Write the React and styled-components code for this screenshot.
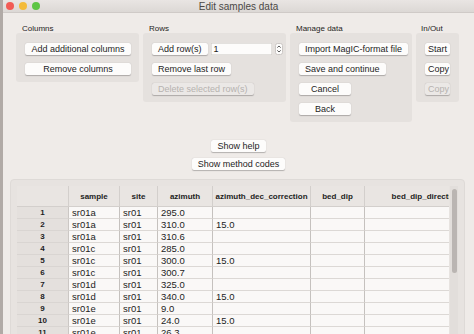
import React from "react";
import styled, { createGlobalStyle } from "styled-components";

const GlobalStyle = createGlobalStyle`
  html, body {
    margin: 0;
    padding: 0;
    overflow: hidden;
    background: #efebe8;
  }
  * { box-sizing: border-box; }
`;

const Window = styled.div`
  width: 474px;
  height: 334px;
  overflow: hidden;
  background: #efebe8;
  border-left: 3px solid #b1aaa6;
  font-family: "Liberation Sans", Arial, sans-serif;
  color: #1d1d1d;
  display: flex;
  flex-direction: column;
`;

const TitleBar = styled.div`
  height: 13px;
  flex: none;
  background: linear-gradient(#e9e5e3, #dcd8d5);
  border-bottom: 1px solid #cfcac7;
  position: relative;
  display: flex;
  align-items: center;
  justify-content: center;
  font-size: 10px;
  color: #4b4846;
`;

const Lights = styled.div`
  position: absolute;
  left: 3px;
  top: 2px;
  display: flex;
  gap: 5px;
`;

const Light = styled.span`
  width: 8px;
  height: 8px;
  border-radius: 50%;
  background: ${(p) => p.$c};
`;

const Controls = styled.div`
  display: flex;
  align-items: flex-start;
  gap: 4px;
  padding: 11px 0 0 13px;
`;

const Group = styled.div`
  display: flex;
  flex-direction: column;
  width: ${(p) => p.$w}px;
`;

const GroupLabel = styled.div`
  font-size: 8px;
  height: 9px;
  line-height: 9px;
  padding-left: ${(p) => p.$pad || 6}px;
  color: #262423;
`;

const Box = styled.div`
  background: #e5e1de;
  border-radius: 3px;
  padding: 10px 8px 7px 9px;
  display: flex;
  flex-direction: column;
  align-items: ${(p) => (p.$stretch ? "stretch" : "flex-start")};
  gap: 8px;
`;

const Button = styled.div`
  height: 12px;
  line-height: 12px;
  padding: 0 6px;
  font-size: 9px;
  background: ${(p) => (p.$disabled ? "#ebe8e6" : "#fdfcfb")};
  color: ${(p) => (p.$disabled ? "#b6b2af" : "#1d1d1d")};
  border-radius: 2px;
  box-shadow: 0 0.5px 1px rgba(0, 0, 0, 0.25);
  white-space: nowrap;
  overflow: hidden;
  text-align: center;
  width: ${(p) => (p.$w ? `${p.$w}px` : "auto")};
`;

const SlimButton = styled(Button)`
  padding: 0 0 0 3px;
  text-align: left;
  width: 25px;
`;

const Row = styled.div`
  display: flex;
  align-items: center;
  gap: 3px;
`;

const NumInput = styled.div`
  width: 61px;
  height: 12px;
  line-height: 12px;
  background: #fdfcfb;
  box-shadow: inset 0 0 0 0.5px #c9c5c2;
  font-size: 9px;
  padding-left: 3px;
`;

const HelpArea = styled.div`
  display: flex;
  flex-direction: column;
  align-items: center;
  gap: 6px;
  margin-top: 18px;
`;

const Panel = styled.div`
  margin: 9px 9px 0 7px;
  flex: 1;
  background: #e7e3e0;
  border: 1px solid #dedad7;
  border-radius: 4px;
  padding: 6px 7px 0 6px;
  display: flex;
  gap: 1px;
`;

const TableView = styled.div`
  width: 432px;
  overflow: hidden;
  flex: none;
`;

const Table = styled.div`
  display: grid;
  grid-template-columns: 52px 51px 38px 55px 98px 54px 123px;
  width: max-content;
`;

const HeadCell = styled.div`
  height: 21px;
  display: flex;
  align-items: center;
  justify-content: center;
  font-size: 8px;
  font-weight: bold;
  background: #e9e5e2;
  border-right: 1px solid #d3cfcc;
  border-bottom: 1px solid #d3cfcc;
  white-space: nowrap;
`;

const IndexCell = styled.div`
  height: 12px;
  line-height: 11px;
  text-align: center;
  font-size: 8px;
  font-weight: bold;
  background: #e4e0dd;
  border-right: 1px solid #cbc7c4;
  border-bottom: 1px solid #d9d5d2;
`;

const Cell = styled.div`
  height: 12px;
  line-height: 11px;
  font-size: 9.5px;
  padding-left: 3px;
  background: #faf8f7;
  border-right: 1px solid #c5c1be;
  border-bottom: 1px solid #dcd8d5;
  white-space: nowrap;
`;

const ScrollTrack = styled.div`
  width: 8px;
  flex: none;
  padding: 3px 1.5px;
  background: #e2dedb;
`;

const Thumb = styled.div`
  height: 84px;
  border-radius: 3px;
  background: #bab5b2;
`;

const Spinner = () => (
  <svg width="8" height="12" viewBox="0 0 8 12">
    <rect x="0.5" y="0.5" width="7" height="11" rx="2" fill="#fdfcfb" stroke="#cbc7c4" />
    <path d="M2.3 4.6 L4 3 L5.7 4.6" fill="none" stroke="#444" strokeWidth="0.9" />
    <path d="M2.3 7.4 L4 9 L5.7 7.4" fill="none" stroke="#444" strokeWidth="0.9" />
  </svg>
);

const headers = ["", "sample", "site", "azimuth", "azimuth_dec_correction", "bed_dip", "bed_dip_direction"];

const rows = [
  ["sr01a", "sr01", "295.0", ""],
  ["sr01a", "sr01", "310.0", "15.0"],
  ["sr01a", "sr01", "310.6", ""],
  ["sr01c", "sr01", "285.0", ""],
  ["sr01c", "sr01", "300.0", "15.0"],
  ["sr01c", "sr01", "300.7", ""],
  ["sr01d", "sr01", "325.0", ""],
  ["sr01d", "sr01", "340.0", "15.0"],
  ["sr01e", "sr01", "9.0", ""],
  ["sr01e", "sr01", "24.0", "15.0"],
  ["sr01e", "sr01", "26.3", ""],
];

export default function App() {
  return (
    <>
      <GlobalStyle />
      <Window>
        <TitleBar>
          <Lights>
            <Light $c="#f25b55" />
            <Light $c="#f4bb3a" />
            <Light $c="#5ec544" />
          </Lights>
          Edit samples data
        </TitleBar>

        <Controls>
          <Group $w={123}>
            <GroupLabel>Columns</GroupLabel>
            <Box $stretch>
              <Button>Add additional columns</Button>
              <Button>Remove columns</Button>
            </Box>
          </Group>
          <Group $w={143}>
            <GroupLabel>Rows</GroupLabel>
            <Box>
              <Row>
                <Button>Add row(s)</Button>
                <NumInput>1</NumInput>
                <Spinner />
              </Row>
              <Button>Remove last row</Button>
              <Button $disabled>Delete selected row(s)</Button>
            </Box>
          </Group>
          <Group $w={122}>
            <GroupLabel>Manage data</GroupLabel>
            <Box>
              <Button>Import MagIC-format file</Button>
              <Button>Save and continue</Button>
              <Button $w={52}>Cancel</Button>
              <Button $w={52}>Back</Button>
            </Box>
          </Group>
          <Group $w={43}>
            <GroupLabel $pad={5}>In/Out</GroupLabel>
            <Box>
              <SlimButton>Start</SlimButton>
              <SlimButton>Copy</SlimButton>
              <SlimButton $disabled>Copy</SlimButton>
            </Box>
          </Group>
        </Controls>

        <HelpArea>
          <Button>Show help</Button>
          <Button>Show method codes</Button>
        </HelpArea>

        <Panel>
          <TableView>
            <Table>
              {headers.map((h, i) => (
                <HeadCell key={i}>{h}</HeadCell>
              ))}
              {rows.map((r, i) => (
                <React.Fragment key={i}>
                  <IndexCell>{i + 1}</IndexCell>
                  <Cell>{r[0]}</Cell>
                  <Cell>{r[1]}</Cell>
                  <Cell>{r[2]}</Cell>
                  <Cell>{r[3]}</Cell>
                  <Cell />
                  <Cell />
                </React.Fragment>
              ))}
            </Table>
          </TableView>
          <ScrollTrack>
            <Thumb />
          </ScrollTrack>
        </Panel>
      </Window>
    </>
  );
}
